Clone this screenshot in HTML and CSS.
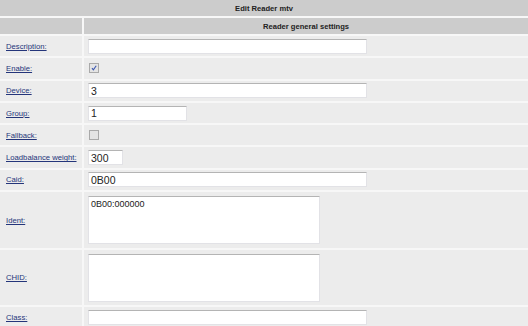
FILE: index.html
```html
<!DOCTYPE html>
<html>
<head>
<meta charset="utf-8">
<link rel="stylesheet" href="styles.css">
</head>
<body>
<div class="form">
  <div class="hd hd-main">Edit Reader mtv</div>
  <div class="hd hd-empty"></div>
  <div class="hd">Reader general settings</div>

  <div class="lbl"><a href="#">Description:</a></div>
  <div class="val"><span class="inp w-long"></span></div>

  <div class="lbl"><a href="#">Enable:</a></div>
  <div class="val"><span class="chk"><svg viewBox="0 0 9 9" width="8" height="8"><path d="M2.2 4.6 L3.8 6.6 L7 2" fill="none" stroke="#3a56b0" stroke-width="1.2"/></svg></span></div>

  <div class="lbl"><a href="#">Device:</a></div>
  <div class="val"><span class="inp w-long">3</span></div>

  <div class="lbl"><a href="#">Group:</a></div>
  <div class="val"><span class="inp w-mid">1</span></div>

  <div class="lbl"><a href="#">Fallback:</a></div>
  <div class="val"><span class="chk"></span></div>

  <div class="lbl"><a href="#">Loadbalance weight:</a></div>
  <div class="val"><span class="inp w-short">300</span></div>

  <div class="lbl"><a href="#">Caid:</a></div>
  <div class="val"><span class="inp w-long">0B00</span></div>

  <div class="lbl"><a href="#">Ident:</a></div>
  <div class="val"><span class="ta">0B00:000000<span class="grip"></span></span></div>

  <div class="lbl"><a href="#">CHID:</a></div>
  <div class="val"><span class="ta"><span class="grip"></span></span></div>

  <div class="lbl"><a href="#">Class:</a></div>
  <div class="val"><span class="inp w-long"></span></div>
</div>
</body>
</html>
```
FILE: styles.css
```css
html, body {
  margin: 0;
  padding: 0;
  background: #f7f7f7;
}
body {
  font-family: "Liberation Sans", Arial, sans-serif;
  overflow: hidden;
}
.form {
  display: grid;
  grid-template-columns: 82px 1fr;
  grid-template-rows: 16px 16px repeat(7, 20.3px) 56px 55px 20px;
  gap: 2px;
  background: #f7f7f7;
}
.hd {
  background: #cccccc;
  font-weight: bold;
  font-size: 7.6px;
  color: #222;
  display: flex;
  align-items: center;
  justify-content: center;
}
.hd-main {
  grid-column: 1 / 3;
}
.lbl, .val {
  background: #ececec;
  display: flex;
  align-items: center;
}
.lbl {
  padding-left: 6px;
  font-size: 7.7px;
}
.lbl a {
  color: #24357a;
  text-decoration: underline;
}
.val {
  padding-left: 4px;
}
.inp {
  display: flex;
  align-items: center;
  box-sizing: border-box;
  height: 15px;
  background: #fff;
  border: 1px solid #e2e2e6;
  border-top-color: #b4b4b4;
  font-size: 10.5px;
  color: #222;
  padding-left: 2px;
}
.w-long { width: 279px; }
.w-mid { width: 99px; }
.w-short { width: 35px; }
.chk {
  box-sizing: border-box;
  width: 10px;
  height: 10px;
  border: 1px solid #a9a9a9;
  background: #e4e4e4;
  display: flex;
  align-items: center;
  justify-content: center;
  margin-left: 1px;
}
.chk svg { display: block; }
.ta {
  position: relative;
  box-sizing: border-box;
  width: 232px;
  height: 48px;
  background: #fff;
  border: 1px solid #e2e2e6;
  border-top-color: #b4b4b4;
  font-size: 9px;
  color: #222;
  padding: 2px 2px;
}
.grip {
  position: absolute;
  right: 2px;
  bottom: 2px;
  width: 5px;
  height: 5px;
  background:
    radial-gradient(circle, #aaa 0.6px, transparent 0.7px) 0 0 / 2px 2px;
  clip-path: polygon(100% 0, 100% 100%, 0 100%);
}
```
